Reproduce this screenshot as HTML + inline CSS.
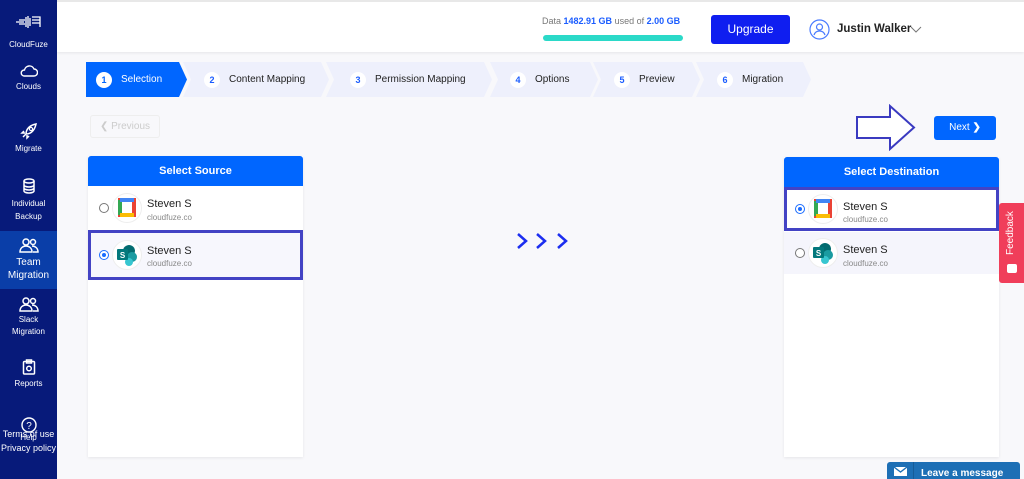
<!DOCTYPE html><html><head><style>
*{box-sizing:border-box;margin:0;padding:0}
html,body{width:1024px;height:479px;overflow:hidden}
body{font-family:"Liberation Sans",sans-serif;background:#f8f8fb;position:relative}
.sb{position:absolute;left:0;top:0;width:57px;height:479px;background:#071a7a;color:#fff;font-size:8px;text-align:center}
.sb .it{position:absolute;left:0;width:57px}
.top{position:absolute;left:57px;top:0;right:0;height:52px;background:#fff;border-top:2px solid #e8e8e8;box-shadow:0 1px 3px rgba(0,0,0,.08)}
.step{position:absolute;top:62px;height:35px;line-height:16px;background:#eef0fc;font-size:10px;color:#222;display:flex;align-items:center;clip-path:polygon(0 0,calc(100% - 8px) 0,100% 50%,calc(100% - 8px) 100%,0 100%,8px 50%)}
.step b{display:inline-block;width:16px;height:16px;border-radius:50%;background:#fff;color:#1a5cff;font-size:9px;text-align:center;line-height:16px;margin-right:9px}
.card{position:absolute;background:#fff;box-shadow:0 1px 3px rgba(0,0,0,.08)}
.card .h{height:30px;background:#0066ff;color:#fff;font-size:11px;font-weight:bold;text-align:center;line-height:30px;border-radius:3px 3px 0 0}
.row{position:absolute;left:0;right:0;height:44px}
.rad{position:absolute;left:11px;top:50%;margin-top:-5px;width:10px;height:10px;border-radius:50%;border:1px solid #777;background:#fff}
.rad.on{border-color:#1a6cff}.rad.on:after{content:"";position:absolute;left:2px;top:2px;width:4px;height:4px;border-radius:50%;background:#1a6cff}
.logo{position:absolute;left:24px;top:50%;margin-top:-15px;width:30px;height:30px;border-radius:50%;border:1px solid #eee;background:#fff}
.nm{position:absolute;left:59px;top:12px;font-size:11px;color:#222}
.em{position:absolute;left:59px;top:27px;font-size:8px;color:#888}
</style></head><body>
<div class="sb">
<div class="it" style="top:14px"><svg width="30" height="16" viewBox="0 0 30 16"><g stroke="#fff" stroke-width="1.3" fill="none"><path d="M2 8h8M5 6h6M5 10h6M12 3v10M14 2v12M16 4v8M18 3h8v10M18 6h8M18 9h8"/></g></svg><div style="margin-top:8px">CloudFuze</div></div>
<div class="it" style="top:64px"><svg width="18" height="13" viewBox="0 0 18 13"><path d="M4 12h10a3.5 3.5 0 0 0 0-7 5 5 0 0 0-9.5 1A3 3 0 0 0 4 12z" fill="none" stroke="#fff" stroke-width="1.4"/></svg><div style="margin-top:3px">Clouds</div></div>
<div class="it" style="top:122px"><svg width="18" height="18" viewBox="0 0 18 18"><path d="M6 12c0-6 5-9 10-10-1 5-4 10-10 10zM6 12l-3 3M4 9l-2 2 3 0M9 14l-2 2 0-3" fill="none" stroke="#fff" stroke-width="1.5"/><circle cx="11" cy="7" r="1.6" fill="none" stroke="#fff" stroke-width="1.2"/></svg><div style="margin-top:2px">Migrate</div></div>
<div class="it" style="top:178px"><svg width="14" height="16" viewBox="0 0 14 16"><g fill="none" stroke="#fff" stroke-width="1.5"><ellipse cx="7" cy="3" rx="5" ry="2"/><path d="M2 3v10c0 1 2 2 5 2s5-1 5-2V3M2 7c0 1 2 2 5 2s5-1 5-2M2 10c0 1 2 2 5 2s5-1 5-2"/></g></svg><div style="margin-top:1px;line-height:13px">Individual<br>Backup</div></div>
<div class="it" style="top:231px;height:58px;background:#0a3ea8;font-size:10px;padding-top:6px"><svg width="20" height="16" viewBox="0 0 20 16"><g fill="none" stroke="#fff" stroke-width="1.5"><circle cx="7" cy="5" r="3"/><circle cx="14" cy="5" r="2.5"/><path d="M1 15c0-4 3-6 6-6s6 2 6 6zM13 9c3 0 6 2 6 6h-5"/></g></svg><div style="line-height:13px">Team<br>Migration</div></div>
<div class="it" style="top:296px"><svg width="20" height="16" viewBox="0 0 20 16"><g fill="none" stroke="#fff" stroke-width="1.5"><circle cx="7" cy="5" r="3"/><circle cx="14" cy="5" r="2.5"/><path d="M1 15c0-4 3-6 6-6s6 2 6 6zM13 9c3 0 6 2 6 6h-5"/></g></svg><div style="line-height:12px">Slack<br>Migration</div></div>
<div class="it" style="top:359px"><svg width="14" height="16" viewBox="0 0 14 16"><g fill="none" stroke="#fff" stroke-width="1.5"><rect x="1.5" y="2.5" width="11" height="12.5" rx="1"/><rect x="4.5" y="1" width="5" height="3"/><circle cx="7" cy="9.5" r="2.3"/></g></svg><div style="margin-top:2px">Reports</div></div>
<div class="it" style="top:417px"><svg width="16" height="16" viewBox="0 0 16 16"><circle cx="8" cy="8" r="7" fill="none" stroke="#fff" stroke-width="1.4"/><text x="8" y="12" font-size="10" fill="#fff" text-anchor="middle" font-family="Liberation Sans">?</text></svg></div>
<div class="it" style="top:427px;font-size:9px;line-height:14px">Terms of use<br>Privacy policy</div>
<div class="it" style="top:433px;font-size:8px">Help</div>
</div>
<div class="top">
<div style="position:absolute;left:485px;top:14px;font-size:9px;color:#777">Data <b style="color:#1a5cff">1482.91 GB</b> used of <b style="color:#1a5cff">2.00 GB</b></div>
<div style="position:absolute;left:486px;top:33px;width:140px;height:6px;border-radius:3px;background:#2bd9c8"></div>
<div style="position:absolute;left:654px;top:13px;width:79px;height:29px;border-radius:3px;background:#0f1ef0;color:#fff;font-size:12px;text-align:center;line-height:29px">Upgrade</div>
<svg style="position:absolute;left:752px;top:17px" width="21" height="21" viewBox="0 0 21 21"><g fill="none" stroke="#4a7bff" stroke-width="1.2"><circle cx="10.5" cy="10.5" r="9.5"/><circle cx="10.5" cy="8" r="3"/><path d="M5 16c1-3 3-4 5.5-4s4.5 1 5.5 4"/></g></svg>
<div style="position:absolute;left:780px;top:21px;font-size:11.5px;font-weight:bold;color:#222">Justin Walker</div>
<svg style="position:absolute;left:853px;top:24px" width="12" height="7" viewBox="0 0 12 7"><path d="M1 1l5 5 5-5" fill="none" stroke="#777" stroke-width="1"/></svg>
</div>
<div class="step" style="left:86px;width:101px;background:#0066ff;color:#fff;padding-left:10px;clip-path:polygon(0 0,calc(100% - 8px) 0,100% 50%,calc(100% - 8px) 100%,0 100%)"><b style="color:#0066ff">1</b>Selection</div>
<div class="step" style="left:183px;width:146px;padding-left:21px"><b>2</b>Content Mapping</div>
<div class="step" style="left:326px;width:166px;padding-left:24px"><b>3</b>Permission Mapping</div>
<div class="step" style="left:490px;width:108px;padding-left:20px"><b>4</b>Options</div>
<div class="step" style="left:593px;width:107px;padding-left:21px"><b>5</b>Preview</div>
<div class="step" style="left:696px;width:115px;padding-left:21px"><b>6</b>Migration</div>
<div style="position:absolute;left:90px;top:115px;width:70px;height:23px;border:1px solid #eee;border-radius:3px;color:#ccc;font-size:10px;line-height:21px;text-align:center">❮ Previous</div>
<svg style="position:absolute;left:855px;top:104px" width="62" height="47" viewBox="0 0 62 47"><path d="M2 13h33V2l24 21.5L35 45V34H2z" fill="#fff" stroke="#3a3ac0" stroke-width="2"/></svg>
<div style="position:absolute;left:934px;top:116px;width:62px;height:24px;border-radius:3px;background:#0066ff;color:#fff;font-size:10px;line-height:24px;text-align:center">Next <b>❯</b></div>
<div class="card" style="left:88px;top:156px;width:215px;height:301px"><div class="h">Select Source</div>
<div class="row" style="top:30px"><div class="rad"></div><div class="logo"><svg width="28" height="28" viewBox="0 0 28 28"><rect x="7" y="6" width="14" height="15" fill="none" stroke="#ea4335" stroke-width="4"/><path d="M7 6v15" stroke="#34a853" stroke-width="4"/><path d="M7 21h14" stroke="#fbbc04" stroke-width="4"/><path d="M7 6h14" stroke="#4285f4" stroke-width="4"/></svg></div><div class="nm">Steven S</div><div class="em">cloudfuze.co</div></div>
<div class="row" style="top:74px;height:50px;border:3px solid #4343c4;background:#f7f7fd"><div class="rad on" style="left:8px"></div><div class="logo" style="left:21px"><svg width="28" height="28" viewBox="0 0 28 28"><circle cx="16" cy="10" r="6" fill="#036c70"/><circle cx="19" cy="16" r="5" fill="#1a9ba1"/><circle cx="16" cy="21" r="4" fill="#37c6d0"/><rect x="4" y="8" width="11" height="11" rx="1" fill="#03787c"/><text x="9.5" y="17" font-size="8" fill="#fff" text-anchor="middle" font-weight="bold" font-family="Liberation Sans">S</text></svg></div><div class="nm" style="left:56px;top:12px">Steven S</div><div class="em" style="left:56px;top:26px">cloudfuze.co</div></div>
</div>
<svg style="position:absolute;left:515px;top:231px" width="58" height="20" viewBox="0 0 58 20"><g fill="none" stroke="#1c2ef0" stroke-width="2.5"><path d="M3 3l8 7-8 7M22 3l8 7-8 7M43 3l8 7-8 7"/></g></svg>
<div class="card" style="left:784px;top:157px;width:215px;height:300px"><div class="h">Select Destination</div>
<div class="row" style="top:30px;height:44px;border:3px solid #4343c4"><div class="rad on" style="left:8px"></div><div class="logo" style="left:21px"><svg width="28" height="28" viewBox="0 0 28 28"><rect x="7" y="6" width="14" height="15" fill="none" stroke="#ea4335" stroke-width="4"/><path d="M7 6v15" stroke="#34a853" stroke-width="4"/><path d="M7 21h14" stroke="#fbbc04" stroke-width="4"/><path d="M7 6h14" stroke="#4285f4" stroke-width="4"/></svg></div><div class="nm" style="left:56px;top:11px">Steven S</div><div class="em" style="left:56px;top:25px">cloudfuze.co</div></div>
<div class="row" style="top:75px;height:42px;background:#f5f5fc"><div class="rad"></div><div class="logo"><svg width="28" height="28" viewBox="0 0 28 28"><circle cx="16" cy="10" r="6" fill="#036c70"/><circle cx="19" cy="16" r="5" fill="#1a9ba1"/><circle cx="16" cy="21" r="4" fill="#37c6d0"/><rect x="4" y="8" width="11" height="11" rx="1" fill="#03787c"/><text x="9.5" y="17" font-size="8" fill="#fff" text-anchor="middle" font-weight="bold" font-family="Liberation Sans">S</text></svg></div><div class="nm" style="top:12px">Steven S</div><div class="em" style="top:27px">cloudfuze.co</div></div>
</div>
<div style="position:absolute;left:999px;top:203px;width:25px;height:80px;background:#f03e5a;border-radius:3px 0 0 3px"><div style="position:absolute;left:6px;top:52px;transform:rotate(-90deg);transform-origin:0 0;color:#fff;font-size:10px">Feedback</div><div style="position:absolute;left:8px;top:61px;width:10px;height:9px;background:#fff;border-radius:2px"></div></div>
<div style="position:absolute;left:887px;top:462px;width:133px;height:17px;overflow:hidden;background:#1d6fb5;border-radius:3px 3px 0 0;color:#fff;font-size:10px;font-weight:bold"><div style="position:absolute;left:0;top:0;width:27px;height:20px;border-right:1px solid #165c98"></div><svg style="position:absolute;left:7px;top:5px" width="13" height="9" viewBox="0 0 13 9"><rect width="13" height="9" fill="#fff"/><path d="M0 0l6.5 5L13 0" fill="none" stroke="#1d6fb5" stroke-width="1.3"/></svg><span style="position:absolute;left:34px;top:6px">Leave a message</span></div>
</body></html>
